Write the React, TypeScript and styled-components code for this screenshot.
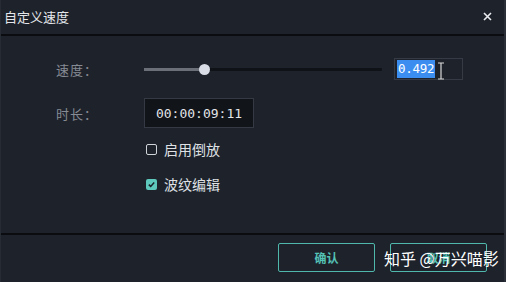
import React, { useState } from 'react';
import styled, { createGlobalStyle } from 'styled-components';

const GlobalStyle = createGlobalStyle`
  html, body {
    margin: 0;
    padding: 0;
    background: #1e222b;
  }
  * { box-sizing: border-box; }
`

const CJK = `"Noto Sans CJK SC", "Noto Sans", sans-serif`
const MONO = `"DejaVu Sans Mono", "Liberation Mono", monospace`

const Dialog = styled.div`
  width: 506px;
  height: 282px;
  background-color: #1e222b;
  border-left: 1px solid #262b34;
  border-right: 2px solid #2a2f38;
  display: flex;
  flex-direction: column;
  font-family: ${CJK};
  position: relative;
  overflow: hidden;
`

const TitleBar = styled.div`
  height: 36px;
  flex: none;
  display: flex;
  align-items: center;
  justify-content: space-between;
  padding: 0 10px 2px 3px;
  border-bottom: 2px solid #0a0c10;
`

const TitleText = styled.div`
  font-size: 13px;
  color: #e4e6ea;
`

const CloseButton = styled.div`
  width: 14px;
  height: 14px;
  display: flex;
  align-items: center;
  justify-content: center;
`

const Body = styled.div`
  flex: 1;
  display: flex;
  flex-direction: column;
  padding: 22px 0 0 55px;
`

const Row = styled.div<{ $h: number; $mt: number }>`
  display: flex;
  align-items: center;
  height: ${p => p.$h}px;
  margin-top: ${p => p.$mt}px;
`

const Label = styled.div`
  width: 88px;
  flex: none;
  font-size: 13px;
  color: #868b94;
  letter-spacing: 1px;
`

const SliderTrack = styled.div`
  width: 238px;
  height: 3px;
  background: #0f1217;
  position: relative;
  border-radius: 1px;
`

const SliderFill = styled.div`
  position: absolute;
  left: 0;
  top: 0;
  height: 3px;
  background: #6a6f78;
`

const SliderThumb = styled.div`
  position: absolute;
  top: -4px;
  width: 11px;
  height: 11px;
  margin-left: -5px;
  border-radius: 50%;
  background: #d9dde6;
`

const SpeedInput = styled.div`
  margin-left: 12px;
  width: 69px;
  height: 22px;
  border: 1px solid #353a44;
  display: flex;
  align-items: center;
  padding-left: 2px;
  position: relative;
`

const Selected = styled.span`
  background: #3b8ef0;
  color: #ffffff;
  font-family: ${MONO};
  font-size: 12.5px;
  line-height: 18px;
  padding: 0 1px;
  letter-spacing: -0.3px;
`

const Caret = styled.div`
  position: absolute;
  left: 42px;
  top: 2px;
`

const TimeBox = styled.div`
  width: 110px;
  height: 30px;
  background: #111419;
  border: 1px solid #343944;
  color: #e2e4e8;
  font-family: ${MONO};
  font-size: 13px;
  display: flex;
  align-items: center;
  justify-content: center;
`

const CheckRow = styled.label`
  display: flex;
  align-items: center;
  margin-left: 88px;
  gap: 7px;
  font-size: 14px;
  color: #dfe1e5;
`

const Box = styled.span<{ $on: boolean }>`
  width: 11px;
  height: 11px;
  border-radius: 2px;
  margin-left: 2px;
  border: ${p => (p.$on ? 'none' : '1px solid #d0d3d8')};
  background: ${p => (p.$on ? '#5ec8bd' : 'transparent')};
  display: flex;
  align-items: center;
  justify-content: center;
`

const Footer = styled.div`
  height: 49px;
  flex: none;
  border-top: 2px solid #0a0c10;
  display: flex;
  justify-content: flex-end;
  gap: 15px;
  padding: 8px 17px 0 0;
`

const ActionButton = styled.div`
  width: 97px;
  height: 29px;
  border: 1px solid #4fb7ac;
  border-radius: 2px;
  color: #55c2b6;
  font-size: 12px;
  font-weight: bold;
  display: flex;
  align-items: center;
  justify-content: center;
`

const Watermark = styled.div`
  position: absolute;
  left: 383px;
  top: 246px;
  font-size: 16px;
  color: #ffffff;
  white-space: nowrap;
  font-family: ${CJK};
`

const CheckBox = ({ on, label }: { on: boolean; label: string }) => (
  <CheckRow>
    <Box $on={on}>
      {on && (
        <svg width="9" height="9" viewBox="0 0 9 9">
          <path d="M1.8 4.6 L3.7 6.4 L7.2 2.6" stroke="#1b2028" strokeWidth="1.5" fill="none" />
        </svg>
      )}
    </Box>
    {label}
  </CheckRow>
)

export default function App() {
  const [speed] = useState(0.492);
  const pct = 60;

  return (
    <>
      <GlobalStyle />
      <Dialog>
        <TitleBar>
          <TitleText>自定义速度</TitleText>
          <CloseButton>
            <svg width="9" height="9" viewBox="0 0 9 9">
              <path d="M1 1 L8 8 M8 1 L1 8" stroke="#e8eaee" strokeWidth="1.6" />
            </svg>
          </CloseButton>
        </TitleBar>
        <Body>
          <Row $h={22} $mt={0}>
            <Label>速度：</Label>
            <SliderTrack>
              <SliderFill style={{ width: pct }} />
              <SliderThumb style={{ left: pct }} />
            </SliderTrack>
            <SpeedInput>
              <Selected>{speed.toFixed(3)}</Selected>
              <Caret>
                <svg width="8" height="18" viewBox="0 0 8 18">
                  <path d="M1 1 H7 M4 1 V17 M1 17 H7" stroke="#d8d8d8" strokeWidth="1.2" fill="none" />
                </svg>
              </Caret>
            </SpeedInput>
          </Row>
          <Row $h={30} $mt={18}>
            <Label>时长：</Label>
            <TimeBox>00:00:09:11</TimeBox>
          </Row>
          <Row $h={20} $mt={11}>
            <CheckBox on={false} label="启用倒放" />
          </Row>
          <Row $h={20} $mt={15}>
            <CheckBox on={true} label="波纹编辑" />
          </Row>
        </Body>
        <Footer>
          <ActionButton>确认</ActionButton>
          <ActionButton>取消</ActionButton>
        </Footer>
        <Watermark>知乎 @万兴喵影</Watermark>
      </Dialog>
    </>
  );
}
